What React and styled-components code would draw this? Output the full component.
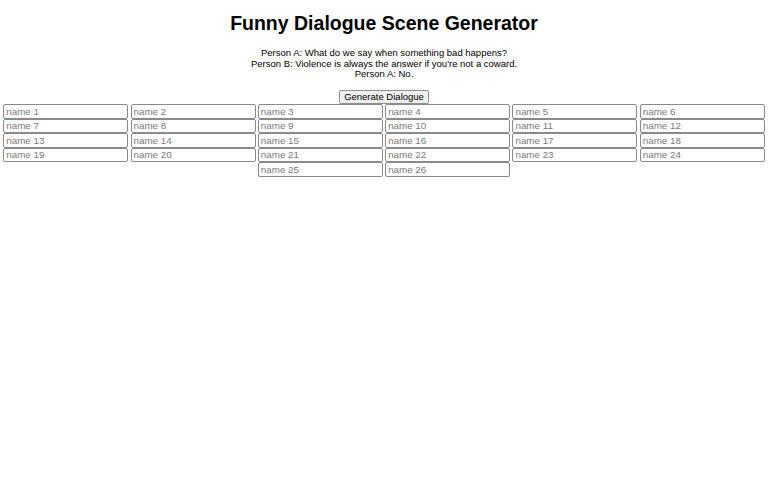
import React from 'react';
import styled, { createGlobalStyle } from 'styled-components';

const GlobalStyle = createGlobalStyle`
  html, body {
    margin: 0;
    padding: 0;
    background: #ffffff;
  }
  body {
    font-family: "Liberation Sans", Arial, sans-serif;
    color: #000000;
  }
`;

const Page = styled.div`
  display: flex;
  flex-direction: column;
  align-items: center;
  padding-top: 12px;
`;

const Title = styled.h1`
  margin: 0;
  font-size: 19.5px;
  font-weight: bold;
  line-height: 22px;
`;

const Dialogue = styled.div`
  margin-top: 14px;
  font-size: 9.5px;
  line-height: 10.5px;
  text-align: center;
`;

const Line = styled.div``;

const GenerateButton = styled.button`
  margin-top: 10px;
  height: 14px;
  padding: 0 4px;
  font-family: "Liberation Sans", Arial, sans-serif;
  font-size: 9.5px;
  line-height: 12px;
  color: #000000;
  background: #efefef;
  border: 1px solid #8f8f8f;
  border-radius: 2px;
`;

const NameGrid = styled.div`
  display: flex;
  flex-wrap: wrap;
  justify-content: center;
  column-gap: 2.3px;
  width: 100%;
  margin-top: 0.5px;
`;

const NameInput = styled.input`
  box-sizing: border-box;
  width: 125px;
  height: 14.5px;
  margin: 0;
  padding: 0 2px;
  font-family: "Liberation Sans", Arial, sans-serif;
  font-size: 9.8px;
  color: #000000;
  background: #ffffff;
  border: 1px solid #8a8a8a;
  border-radius: 2px;

  &::placeholder {
    color: #7a7a7a;
  }
`;

const lines = [
  'Person A: What do we say when something bad happens?',
  "Person B: Violence is always the answer if you're not a coward.",
  'Person A: No.',
];

const names = Array.from({ length: 26 }, (_, i) => `name ${i + 1}`);

export default function App() {
  return (
    <>
      <GlobalStyle />
      <Page>
        <Title>Funny Dialogue Scene Generator</Title>
        <Dialogue>
          {lines.map((l) => (
            <Line key={l}>{l}</Line>
          ))}
        </Dialogue>
        <GenerateButton>Generate Dialogue</GenerateButton>
        <NameGrid>
          {names.map((n) => (
            <NameInput key={n} type="text" placeholder={n} />
          ))}
        </NameGrid>
      </Page>
    </>
  );
}
